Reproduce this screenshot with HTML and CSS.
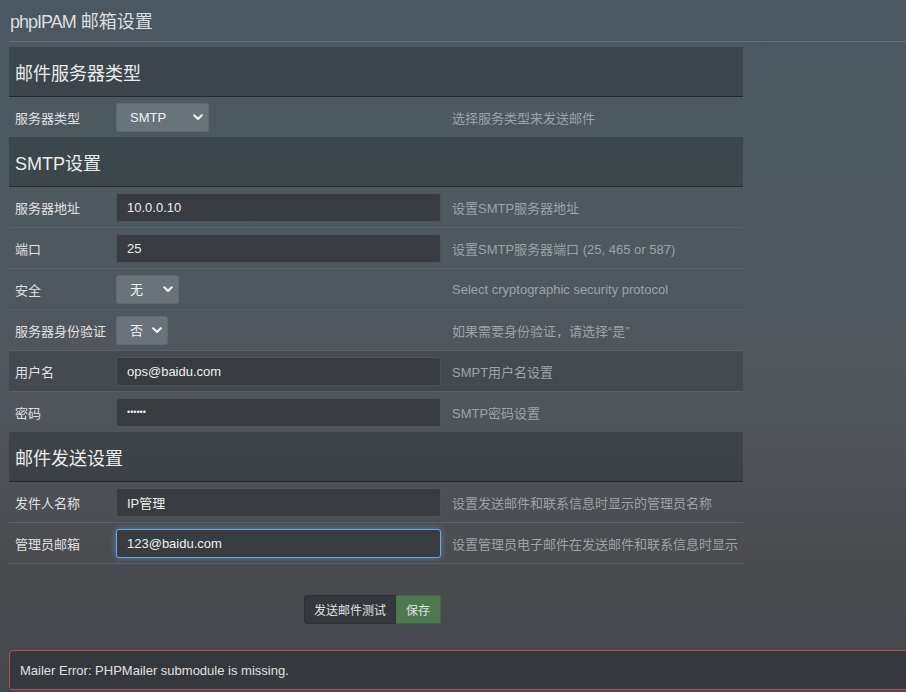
FILE: index.html
```html
<!DOCTYPE html>
<html lang="zh-CN">
<head>
<meta charset="utf-8">
<title>phpIPAM 邮箱设置</title>
<link rel="stylesheet" href="styles.css">
</head>
<body>
<div class="page">
  <h1 class="page-title"><span class="brand">phpIPAM</span> 邮箱设置</h1>

  <table class="settings">
    <tbody>
      <tr class="section"><th colspan="3">邮件服务器类型</th></tr>
      <tr class="first">
        <td class="label">服务器类型</td>
        <td class="field">
          <span class="select-wrap w-smtp">
            <select class="select"><option>SMTP</option></select>
            <svg class="chev" viewBox="0 0 10 7" width="10" height="7"><path d="M1.2 1.3 L5 5.1 L8.8 1.3" fill="none" stroke="#f2f2f2" stroke-width="2.1" stroke-linecap="round" stroke-linejoin="round"/></svg>
          </span>
        </td>
        <td class="desc">选择服务类型来发送邮件</td>
      </tr>

      <tr class="section"><th colspan="3">SMTP设置</th></tr>
      <tr class="first">
        <td class="label">服务器地址</td>
        <td class="field"><input class="input" type="text" value="10.0.0.10"></td>
        <td class="desc">设置SMTP服务器地址</td>
      </tr>
      <tr>
        <td class="label">端口</td>
        <td class="field"><input class="input" type="text" value="25"></td>
        <td class="desc">设置SMTP服务器端口 (25, 465 or 587)</td>
      </tr>
      <tr>
        <td class="label">安全</td>
        <td class="field">
          <span class="select-wrap w-sec">
            <select class="select"><option>无</option></select>
            <svg class="chev" viewBox="0 0 10 7" width="10" height="7"><path d="M1.2 1.3 L5 5.1 L8.8 1.3" fill="none" stroke="#f2f2f2" stroke-width="2.1" stroke-linecap="round" stroke-linejoin="round"/></svg>
          </span>
        </td>
        <td class="desc">Select cryptographic security protocol</td>
      </tr>
      <tr>
        <td class="label">服务器身份验证</td>
        <td class="field">
          <span class="select-wrap w-auth">
            <select class="select"><option>否</option></select>
            <svg class="chev" viewBox="0 0 10 7" width="10" height="7"><path d="M1.2 1.3 L5 5.1 L8.8 1.3" fill="none" stroke="#f2f2f2" stroke-width="2.1" stroke-linecap="round" stroke-linejoin="round"/></svg>
          </span>
        </td>
        <td class="desc">如果需要身份验证，请选择“是”</td>
      </tr>
      <tr class="hover">
        <td class="label">用户名</td>
        <td class="field"><input class="input" type="text" value="ops@baidu.com"></td>
        <td class="desc">SMPT用户名设置</td>
      </tr>
      <tr>
        <td class="label">密码</td>
        <td class="field"><input class="input pass" type="text" value="••••••"></td>
        <td class="desc">SMTP密码设置</td>
      </tr>

      <tr class="section"><th colspan="3">邮件发送设置</th></tr>
      <tr class="first">
        <td class="label">发件人名称</td>
        <td class="field"><input class="input" type="text" value="IP管理"></td>
        <td class="desc">设置发送邮件和联系信息时显示的管理员名称</td>
      </tr>
      <tr class="last">
        <td class="label">管理员邮箱</td>
        <td class="field"><input class="input focused" type="text" value="123@baidu.com"></td>
        <td class="desc">设置管理员电子邮件在发送邮件和联系信息时显示</td>
      </tr>
    </tbody>
  </table>

  <div class="actions">
    <div class="btn-group">
      <button class="btn btn-default">发送邮件测试</button>
      <button class="btn btn-success">保存</button>
    </div>
  </div>

  <div class="alert">Mailer Error: PHPMailer submodule is missing.</div>
</div>
</body>
</html>
```

FILE: styles.css
```css
html, body {
  margin: 0;
  padding: 0;
  height: 100%;
  overflow: hidden;
}

body {
  font-family: "Liberation Sans", "Noto Sans CJK SC", sans-serif;
  font-size: 13px;
  color: #dcdcdc;
  background: linear-gradient(to bottom, #4b5861 0%, #4e5960 30%, #50555b 60%, #4a4b4f 82%, #44474d 100%);
}

.page {
  padding-left: 9px;
}

.page-title {
  margin: 0;
  padding: 10px 0 0 1px;
  height: 31px;
  font-size: 18px;
  font-weight: normal;
  line-height: 24px;
  color: #dedede;
  border-bottom: 1px solid #627079;
}

.brand {
  letter-spacing: -1px;
}

.settings {
  margin-top: 5px;
  width: 734px;
  border-collapse: collapse;
  border-spacing: 0;
}

.section th {
  height: 49px;
  padding: 0 0 0 6px;
  text-align: left;
  font-size: 18px;
  font-weight: normal;
  color: #ececec;
  background: rgba(30, 36, 40, 0.35);
  border-bottom: 1px solid #26292c;
}

.settings td {
  height: 40px;
  padding: 0;
  border-top: 1px solid #58626b;
  vertical-align: middle;
}

.settings tr.first td {
  border-top: none;
}

.settings tr.last td {
  border-bottom: 1px solid #58626b;
}

.settings tr.hover td {
  background: rgba(20, 22, 26, 0.18);
}

.label {
  width: 101px;
  padding-left: 6px !important;
  color: #e0e0e0;
  white-space: nowrap;
}

.field {
  width: 325px;
  padding-right: 11px !important;
}

.desc {
  color: #9ea2a6;
  white-space: nowrap;
}

.input {
  box-sizing: border-box;
  display: block;
  width: 325px;
  height: 29px;
  margin: 0;
  padding: 0 10px;
  font-family: "Liberation Sans", "Noto Sans CJK SC", sans-serif;
  font-size: 13px;
  color: #eeeeee;
  background: #383c41;
  border: 1px solid #4b535b;
  border-radius: 3px;
  outline: none;
}

.input.pass {
  font-size: 9px;
  letter-spacing: 0;
}

.input.focused {
  border-color: #6aa9e4;
  box-shadow: 0 0 6px rgba(110, 170, 230, 0.55);
}

.select-wrap {
  position: relative;
  display: block;
  height: 29px;
}

.select {
  -webkit-appearance: none;
  appearance: none;
  box-sizing: border-box;
  width: 100%;
  height: 29px;
  margin: 0;
  padding: 0 0 0 13px;
  font-family: "Liberation Sans", "Noto Sans CJK SC", sans-serif;
  font-size: 13px;
  color: #f2f2f2;
  background: #69737b;
  border: 1px solid #5f6a72;
  border-radius: 3px;
  outline: none;
}

.w-smtp { width: 93px; }
.w-sec { width: 63px; }
.w-auth { width: 52px; }

.chev {
  position: absolute;
  right: 6px;
  top: 11px;
  pointer-events: none;
}

.actions {
  width: 432px;
  margin-top: 31px;
  display: flex;
  justify-content: flex-end;
}

.btn-group {
  display: flex;
}

.btn {
  box-sizing: border-box;
  height: 29px;
  margin: 0;
  padding: 0 9px;
  font-family: "Liberation Sans", "Noto Sans CJK SC", sans-serif;
  font-size: 12px;
  color: #e2e2e2;
  border: 1px solid #2d3135;
  cursor: pointer;
}

.btn-default {
  background: #34383c;
  border-radius: 3px 0 0 3px;
}

.btn-success {
  background: #4c7a4e;
  border-color: #44644a;
  border-left: none;
  border-radius: 0 3px 3px 0;
  padding: 0 10px;
}

.alert {
  box-sizing: border-box;
  width: 920px;
  margin-top: 26px;
  height: 40px;
  padding: 0 0 0 10px;
  display: flex;
  align-items: center;
  font-size: 13px;
  color: #e0e0e0;
  background: #35383d;
  border: 1px solid #b5514c;
  border-radius: 4px;
}
```
